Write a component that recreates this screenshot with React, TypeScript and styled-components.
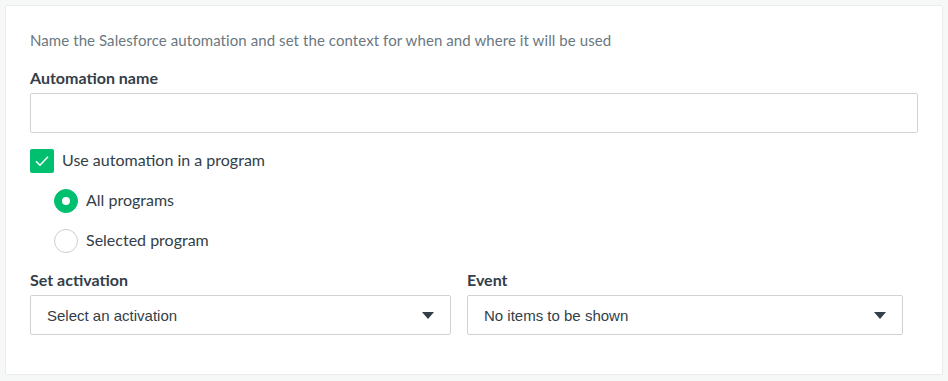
import React from 'react';
import styled, { createGlobalStyle } from 'styled-components';

const GlobalStyle = createGlobalStyle`
  * { box-sizing: border-box; }
  body {
    margin: 0;
    background: #f6f7f7;
    font-family: Lato, "Noto Sans", sans-serif;
    color: #333e48;
  }
`;

const Page = styled.div`
  padding: 5px;
`;

const Card = styled.section`
  width: 938px;
  background: #ffffff;
  border: 1px solid #e9ebec;
  border-radius: 2px;
  padding: 24px 24px 39px;
  display: flex;
  flex-direction: column;
`;

const Description = styled.p`
  margin: 0;
  font-size: 15px;
  line-height: 20px;
  letter-spacing: 0.08px;
  color: #6b787f;
`;

const Label = styled.label<{ $top?: number }>`
  display: block;
  margin-top: ${p => p.$top ?? 18}px;
  margin-bottom: 5px;
  font-size: 16px;
  line-height: 20px;
  font-weight: 700;
  color: #333e48;
`;

const TextInput = styled.input`
  display: block;
  width: 100%;
  height: 40px;
  border: 1px solid #d0d2d3;
  border-radius: 2px;
  padding: 0 16px;
  font-size: 15px;
  outline: none;
`;

const OptionRow = styled.div<{ $indent?: boolean }>`
  display: flex;
  align-items: center;
  gap: 8px;
  height: 24px;
  margin-top: 16px;
  margin-left: ${p => (p.$indent ? 24 : 0)}px;
  font-size: 16px;
  color: #333e48;
`;

const OptionText = styled.span`
  line-height: 20px;
  margin-bottom: 3px;
`;

const CheckBox = styled.span`
  width: 24px;
  height: 24px;
  border-radius: 2px;
  background: #00bf6f;
  display: flex;
  align-items: center;
  justify-content: center;
`;

const Radio = styled.span<{ $checked?: boolean }>`
  width: 24px;
  height: 24px;
  border-radius: 50%;
  display: flex;
  align-items: center;
  justify-content: center;
  background: ${p => (p.$checked ? '#00bf6f' : '#ffffff')};
  border: 1px solid ${p => (p.$checked ? '#00bf6f' : '#ccced0')};

  &::after {
    content: '';
    display: ${p => (p.$checked ? 'block' : 'none')};
    width: 8px;
    height: 8px;
    border-radius: 50%;
    background: #ffffff;
  }
`;

const SelectGrid = styled.div`
  display: grid;
  grid-template-columns: 421px 436px;
  column-gap: 16px;
`;

const Field = styled.div``;

const SelectBox = styled.div`
  height: 40px;
  border: 1px solid #d0d2d3;
  border-radius: 2px;
  padding: 0 16px 0 16px;
  display: flex;
  align-items: center;
  justify-content: space-between;
  font-family: "Liberation Sans", Arial, sans-serif;
  font-size: 15px;
  color: #333e48;
`;

const Caret = styled.span`
  width: 0;
  height: 0;
  border-left: 6.5px solid transparent;
  border-right: 6.5px solid transparent;
  border-top: 7px solid #333e48;
`;

const Check = () => (
  <svg width="18" height="18" viewBox="0 0 18 18" fill="none">
    <path d="M3 9.2 L7 13.2 L15 4.8" stroke="#ffffff" strokeWidth="1.6" />
  </svg>
);

const App = () => (
  <>
    <GlobalStyle />
    <Page>
      <Card>
        <Description>
          Name the Salesforce automation and set the context for when and where it will be used
        </Description>
        <Label>Automation name</Label>
        <TextInput type="text" />
        <OptionRow>
          <CheckBox>
            <Check />
          </CheckBox>
          <OptionText>Use automation in a program</OptionText>
        </OptionRow>
        <OptionRow $indent>
          <Radio $checked />
          <OptionText>All programs</OptionText>
        </OptionRow>
        <OptionRow $indent>
          <Radio />
          <OptionText>Selected program</OptionText>
        </OptionRow>
        <SelectGrid>
          <Field>
            <Label $top={17}>Set activation</Label>
            <SelectBox>
              Select an activation
              <Caret />
            </SelectBox>
          </Field>
          <Field>
            <Label $top={17}>Event</Label>
            <SelectBox>
              No items to be shown
              <Caret />
            </SelectBox>
          </Field>
        </SelectGrid>
      </Card>
    </Page>
  </>
);

export default App;
